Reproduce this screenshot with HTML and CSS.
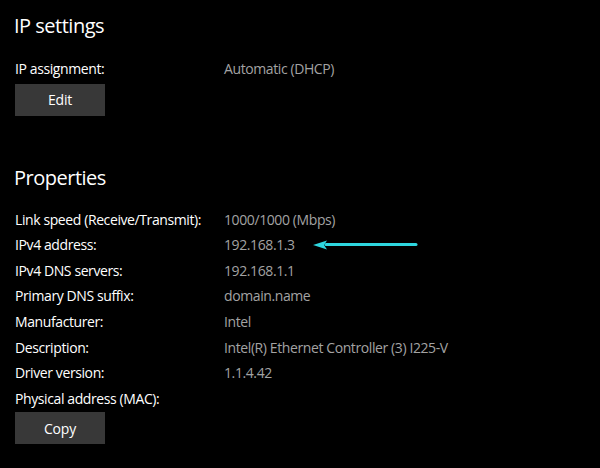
FILE: index.html
```html
<!DOCTYPE html>
<html>
<head>
<meta charset="utf-8">
<link rel="stylesheet" href="styles.css">
</head>
<body>
<div class="page">
  <h2 class="title">IP settings</h2>
  <div class="props first">
    <div class="label">IP assignment:</div><div class="value">Automatic (DHCP)</div>
  </div>
  <button class="btn">Edit</button>

  <h2 class="title second">Properties</h2>
  <div class="props list">
    <div class="label">Link speed (Receive/Transmit):</div><div class="value">1000/1000 (Mbps)</div>
    <div class="label">IPv4 address:</div><div class="value ip">192.168.1.3
      <svg class="arrow" width="110" height="14" viewBox="0 0 110 14"><path d="M104 6.5H14" stroke="#2ed6df" stroke-width="3" stroke-linecap="round"/><path d="M1 7L15 2.5L12 7L15 11.5Z" fill="#2ed6df"/></svg>
    </div>
    <div class="label">IPv4 DNS servers:</div><div class="value">192.168.1.1</div>
    <div class="label">Primary DNS suffix:</div><div class="value">domain.name</div>
    <div class="label">Manufacturer:</div><div class="value">Intel</div>
    <div class="label">Description:</div><div class="value">Intel(R) Ethernet Controller (3) I225-V</div>
    <div class="label">Driver version:</div><div class="value">1.1.4.42</div>
    <div class="label">Physical address (MAC):</div><div class="value"></div>
  </div>
  <button class="btn copy">Copy</button>
</div>
</body>
</html>
```
FILE: styles.css
```css
html, body {
  margin: 0;
  background: #000;
}
body {
  width: 600px;
  height: 468px;
  overflow: hidden;
  font-family: "Open Sans", "Noto Sans", sans-serif;
  color: #fff;
}
.page {
  padding: 12px 0 0 15px;
}
.title {
  margin: 0 0 0 -1px;
  font-size: 20px;
  font-weight: 400;
  line-height: 28px;
  letter-spacing: -0.5px;
  color: #fff;
}
.title.second {
  margin-top: 48px;
}
.props {
  display: grid;
  grid-template-columns: 209px 1fr;
  font-size: 14px;
  line-height: 25.6px;
  letter-spacing: -0.4px;
}
.props.first {
  margin-top: 16px;
}
.props.list {
  margin-top: 15px;
}
.label {
  color: #fff;
}
.value {
  color: #a3a3a3;
}
.ip {
  position: relative;
}
.arrow {
  position: absolute;
  left: 88px;
  top: 6px;
}
.btn {
  display: block;
  width: 90px;
  height: 32px;
  margin-top: 2px;
  border: 0;
  padding: 0;
  background: #383838;
  color: #fff;
  font-family: inherit;
  font-size: 14px;
  letter-spacing: -0.2px;
}
.btn.copy {
  margin-top: 1px;
}
```
